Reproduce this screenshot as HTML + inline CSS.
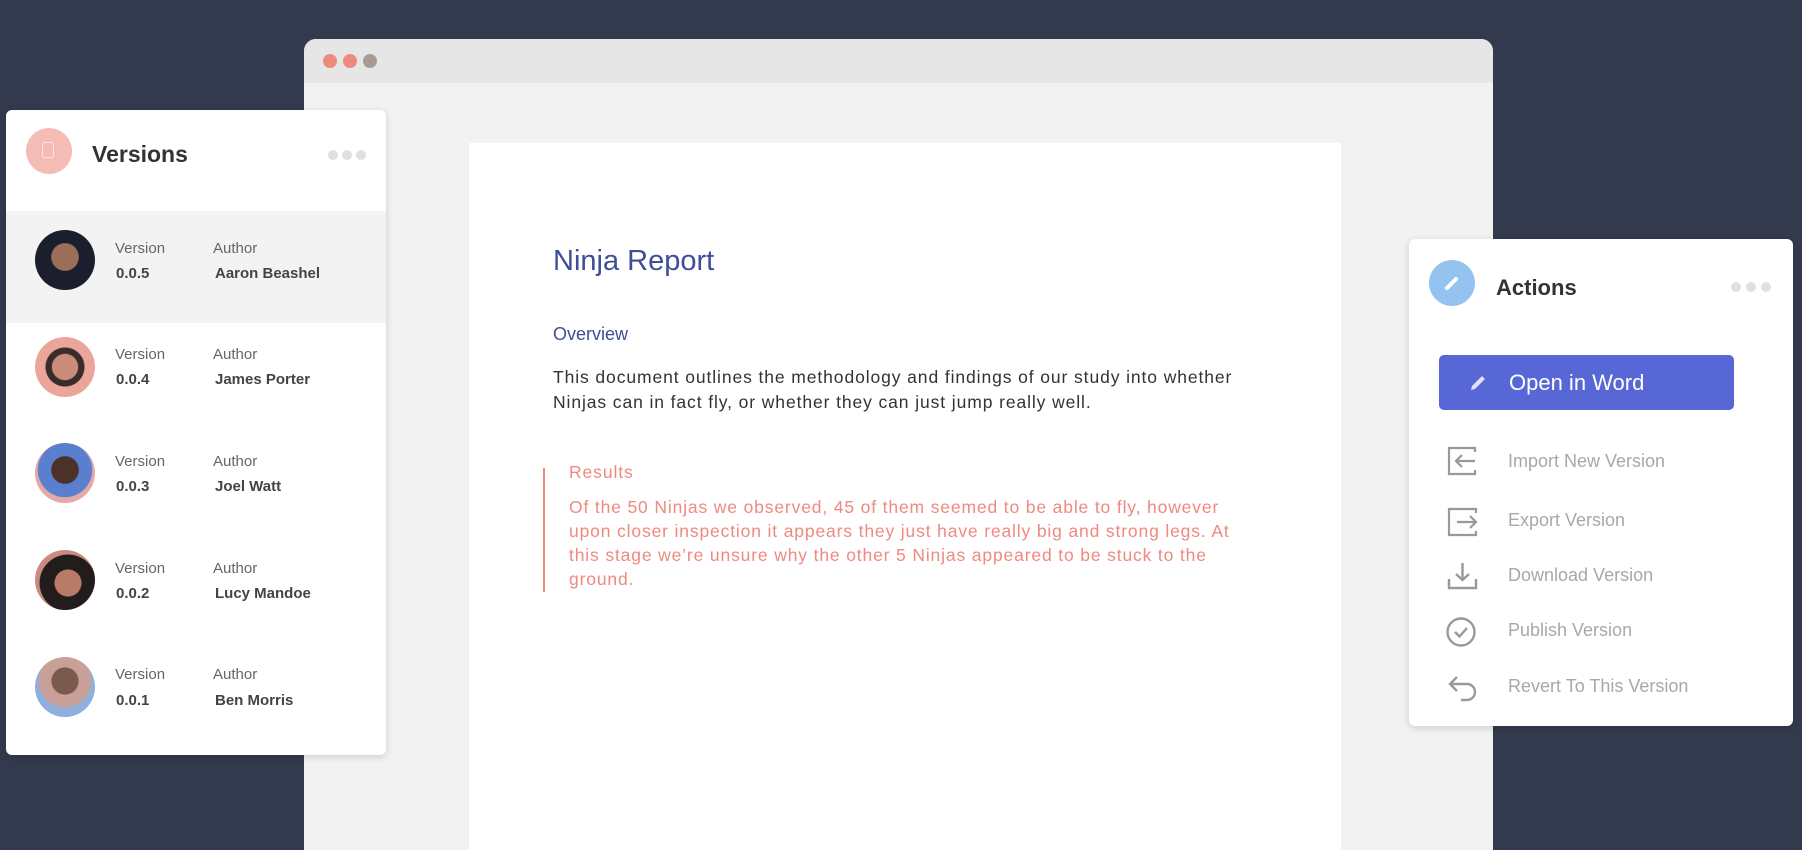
<!DOCTYPE html>
<html><head><meta charset="utf-8"><style>
*{margin:0;padding:0;box-sizing:border-box}
html,body{width:1802px;height:850px;overflow:hidden}
body{background:#343a4e;position:relative;font-family:"Liberation Sans",sans-serif}
.abs{position:absolute}
.win{left:304px;top:39px;width:1189px;height:811px;background:#f2f2f2;border-radius:12px 12px 0 0;overflow:hidden}
.chrome{left:0;top:0;width:100%;height:44px;background:#e6e6e6}
.dot{width:14px;height:14px;border-radius:50%;top:15px}
.page{left:469px;top:143px;width:872px;height:707px;background:#fff}
.doc{white-space:nowrap}
.panel{background:#fff;border-radius:6px;box-shadow:0 2px 8px rgba(0,0,0,.15)}
.lbl{font-size:15px;color:#666}
.val{font-size:15px;font-weight:bold;color:#444}
.av{width:60px;height:60px;border-radius:50%;left:35px}
.gd{width:10px;height:10px;border-radius:50%;background:#e0e0e0}
.item{left:1508px;font-size:18px;color:#a8a8a8}
</style></head><body>
<div class="abs win">
 <div class="abs chrome"></div>
 <div class="abs dot" style="left:19px;background:#ee8a7f"></div>
 <div class="abs dot" style="left:39px;background:#ee8a7f"></div>
 <div class="abs dot" style="left:59px;background:#a89a95"></div>
</div>
<div class="abs page"></div>
<div class="abs doc" style="left:553px;top:245px;font-size:29px;color:#3f4e96">Ninja Report</div>
<div class="abs doc" style="left:553px;top:324px;font-size:18px;color:#3f4e96">Overview</div>
<div class="abs doc" style="left:553px;top:365px;font-size:17.5px;line-height:25px;letter-spacing:0.9px;color:#333">This document outlines the methodology and findings of our study into whether<br>Ninjas can in fact fly, or whether they can just jump really well.</div>
<div class="abs" style="left:543px;top:468px;width:2px;height:124px;background:#ee8a7f"></div>
<div class="abs doc" style="left:569px;top:462px;font-size:17.5px;letter-spacing:0.9px;color:#ee8a7f">Results</div>
<div class="abs doc" style="left:569px;top:495px;font-size:17.5px;line-height:24px;letter-spacing:0.85px;color:#ee8a7f">Of the 50 Ninjas we observed, 45 of them seemed to be able to fly, however<br>upon closer inspection it appears they just have really big and strong legs. At<br>this stage we’re unsure why the other 5 Ninjas appeared to be stuck to the<br>ground.</div>

<div class="abs panel" style="left:6px;top:110px;width:380px;height:645px"></div>
<div class="abs" style="left:26px;top:128px;width:46px;height:46px;border-radius:50%;background:#f4bcb5"></div>
<div class="abs" style="left:42px;top:142px;width:12px;height:16px;border:1.5px solid #fbe2df;border-radius:2px"></div>
<div class="abs" style="left:92px;top:141px;font-size:23px;color:#333;font-weight:bold">Versions</div>
<div class="abs gd" style="left:328px;top:150px"></div><div class="abs gd" style="left:342px;top:150px"></div><div class="abs gd" style="left:356px;top:150px"></div>
<div class="abs" style="left:6px;top:211px;width:380px;height:112px;background:#f3f3f3"></div>

<div class="abs av" style="top:230px;background:radial-gradient(circle at 50% 45%,#9a6e58 0 30%,#1b1e2c 32%)"></div>
<div class="abs lbl" style="left:115px;top:240px">Version</div><div class="abs val" style="left:116px;top:265px">0.0.5</div>
<div class="abs lbl" style="left:213px;top:240px">Author</div><div class="abs val" style="left:215px;top:265px">Aaron Beashel</div>

<div class="abs av" style="top:337px;background:radial-gradient(circle at 50% 50%,#c98c78 0 30%,#3a2c2a 32% 45%,#eba69c 47%)"></div>
<div class="abs lbl" style="left:115px;top:346px">Version</div><div class="abs val" style="left:116px;top:371px">0.0.4</div>
<div class="abs lbl" style="left:213px;top:346px">Author</div><div class="abs val" style="left:215px;top:371px">James Porter</div>

<div class="abs av" style="top:443px;background:radial-gradient(circle at 50% 45%,#4a3228 0 30%,#5a7fcf 32% 60%,#e5a9a8 62%)"></div>
<div class="abs lbl" style="left:115px;top:453px">Version</div><div class="abs val" style="left:116px;top:478px">0.0.3</div>
<div class="abs lbl" style="left:213px;top:453px">Author</div><div class="abs val" style="left:215px;top:478px">Joel Watt</div>

<div class="abs av" style="top:550px;background:radial-gradient(circle at 55% 55%,#b97b66 0 28%,#231c1c 30% 60%,#c98a80 62%)"></div>
<div class="abs lbl" style="left:115px;top:560px">Version</div><div class="abs val" style="left:116px;top:585px">0.0.2</div>
<div class="abs lbl" style="left:213px;top:560px">Author</div><div class="abs val" style="left:215px;top:585px">Lucy Mandoe</div>

<div class="abs av" style="top:657px;background:radial-gradient(circle at 50% 40%,#7a5a4e 0 28%,#c9a098 30% 55%,#8fb0dc 57%)"></div>
<div class="abs lbl" style="left:115px;top:666px">Version</div><div class="abs val" style="left:116px;top:692px">0.0.1</div>
<div class="abs lbl" style="left:213px;top:666px">Author</div><div class="abs val" style="left:215px;top:692px">Ben Morris</div>

<div class="abs panel" style="left:1409px;top:239px;width:384px;height:487px"></div>
<div class="abs" style="left:1429px;top:260px;width:46px;height:46px;border-radius:50%;background:#94c3ef"></div>
<svg class="abs" style="left:1441px;top:272px" width="22" height="22" viewBox="0 0 22 22"><path d="M6 16 L15 7" stroke="#fff" stroke-width="4" stroke-linecap="round"/></svg>
<div class="abs" style="left:1496px;top:275px;font-size:22px;font-weight:bold;color:#333">Actions</div>
<div class="abs gd" style="left:1731px;top:282px"></div><div class="abs gd" style="left:1746px;top:282px"></div><div class="abs gd" style="left:1761px;top:282px"></div>
<div class="abs" style="left:1439px;top:355px;width:295px;height:55px;background:#5867d6;border-radius:5px"></div>
<svg class="abs" style="left:1467px;top:372px" width="22" height="22" viewBox="0 0 22 22"><path d="M4 18 L5 14 L15 4 L18 7 L8 17 Z" fill="#dfe3fa"/></svg>
<div class="abs" style="left:1509px;top:370px;font-size:22px;color:#fff">Open in Word</div>

<svg class="abs" style="left:1447px;top:446px" width="32" height="30" viewBox="0 0 32 30" fill="none" stroke="#999" stroke-width="2.2"><path d="M28 6 V2 H2 V28 H28 V24"/><path d="M28 15 H9 M15 9 L9 15 L15 21"/></svg>
<div class="abs item" style="top:451px">Import New Version</div>
<svg class="abs" style="left:1447px;top:507px" width="32" height="30" viewBox="0 0 32 30" fill="none" stroke="#999" stroke-width="2.2"><path d="M29 6 V2 H2 V28 H29 V24"/><path d="M10 15 H29 M23 9 L29 15 L23 21"/></svg>
<div class="abs item" style="top:510px">Export Version</div>
<svg class="abs" style="left:1447px;top:561px" width="32" height="30" viewBox="0 0 32 30" fill="none" stroke="#999" stroke-width="2.4"><path d="M2 18 V27 H29 V18"/><path d="M15.5 2 V19 M9 13 L15.5 19 L22 13"/></svg>
<div class="abs item" style="top:565px">Download Version</div>
<svg class="abs" style="left:1445px;top:616px" width="32" height="32" viewBox="0 0 32 32" fill="none" stroke="#999" stroke-width="2.4"><circle cx="16" cy="16" r="13.5"/><path d="M10 16 L14.5 20.5 L22 12"/></svg>
<div class="abs item" style="top:620px">Publish Version</div>
<svg class="abs" style="left:1447px;top:674px" width="32" height="30" viewBox="0 0 32 30" fill="none" stroke="#999" stroke-width="2.4"><path d="M10 3 L3 10 L10 17 M3 10 H20 A8 8 0 0 1 20 26 H14"/></svg>
<div class="abs item" style="top:676px">Revert To This Version</div>
</body></html>
